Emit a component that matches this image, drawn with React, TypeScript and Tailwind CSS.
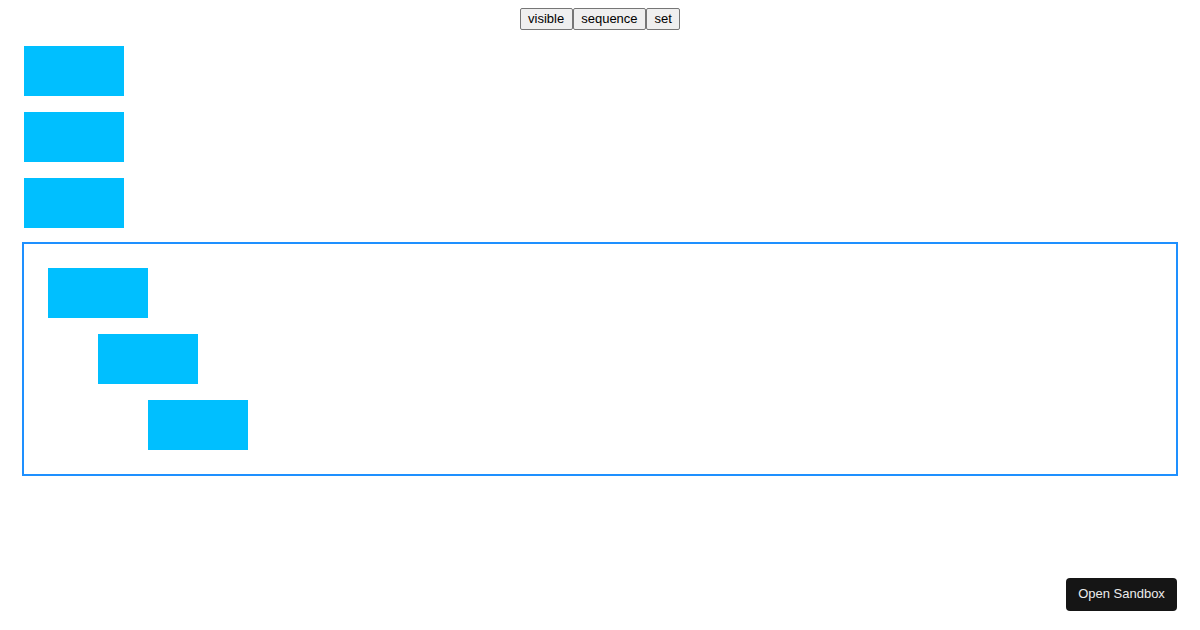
import React from "react";

const Box = ({ className = "" }: { className?: string }) => (
  <div className={`w-[100px] h-[50px] bg-[#00bfff] ${className}`} />
);

const Btn = ({ label }: { label: string }) => (
  <button className="h-[22px] px-[7.5px] pb-[2px] bg-[#efefef] border border-[#767676] rounded-[2px] text-[13px] leading-none text-black font-['Liberation_Sans',Arial,sans-serif]">
    {label}
  </button>
);

export default function App() {
  return (
    <div className="relative w-[1200px] h-[630px] bg-white font-['Liberation_Sans',Arial,sans-serif]">
      <div className="flex justify-center pt-[8px]">
        <Btn label="visible" />
        <Btn label="sequence" />
        <Btn label="set" />
      </div>
      <div className="flex flex-col gap-[16px] pl-[24px] pt-[16px]">
        <Box />
        <Box />
        <Box />
      </div>
      <div className="mx-[22px] mt-[14px] border-2 border-[#1e90ff] p-[24px] flex flex-col gap-[16px]">
        <Box />
        <Box className="ml-[50px]" />
        <Box className="ml-[100px]" />
      </div>
      <button className="absolute right-[23px] bottom-[19px] w-[111px] h-[33px] pb-[1px] rounded-[4px] bg-[#151515] text-[#ececec] text-[13px] font-['Liberation_Sans',Arial,sans-serif]">
        Open Sandbox
      </button>
    </div>
  );
}
